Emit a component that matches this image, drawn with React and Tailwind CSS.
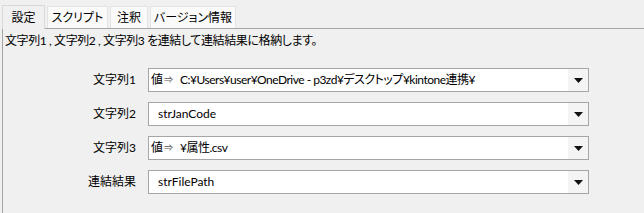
import React from "react";

const tabs = [
  { label: "設定", w: "w-[43px]" },
  { label: "スクリプト", w: "w-[61px]" },
  { label: "注釈", w: "w-[38px]" },
  { label: "バージョン情報", w: "w-[86px]" },
];

const rows = [
  { label: "文字列1", prefix: true, value: "C:¥Users¥user¥OneDrive - p3zd¥デスクトップ¥kintone連携¥" },
  { label: "文字列2", prefix: false, value: "strJanCode" },
  { label: "文字列3", prefix: true, value: "¥属性.csv" },
  { label: "連結結果", prefix: false, value: "strFilePath" },
];

const ComboBox = ({ prefix, value }) => (
  <div className="flex h-[24px] w-[441px] border border-[#a6a6a6] bg-white">
    <div className="flex flex-1 items-center overflow-hidden whitespace-nowrap">
      {prefix ? (
        <>
          <span className="pl-[2px]">値</span>
          <span className="pl-[1px] text-[9px] text-[#555]">⇒</span>
          <span className="pl-[7px] tracking-[-0.5px]">{value}</span>
        </>
      ) : (
        <span className="pl-[9px]">{value}</span>
      )}
    </div>
    <div className="flex w-[20px] items-center justify-center bg-[#f4f4f4]">
      <svg width="9" height="5" viewBox="0 0 9 5">
        <path d="M0 0 H9 L4.5 5 Z" fill="#111" />
      </svg>
    </div>
  </div>
);

export default function App() {
  return (
    <div
      className="h-[213px] w-[644px] overflow-hidden bg-[#f0f0f0] text-[12px] text-black [font-feature-settings:'palt']"
      style={{ fontFamily: '"Lato", "Noto Sans CJK JP", sans-serif' }}
    >
      {/* Tabs */}
      <div className="flex items-end gap-[2px] pl-[2px] pt-[5px]">
        {tabs.map((t, i) => (
          <div
            key={t.label}
            className={
              i === 0
                ? `relative z-10 -mb-px flex h-[24px] ${t.w} items-center justify-center border border-b-0 border-[#d9d9d9] bg-[#f0f0f0]`
                : `flex h-[22px] ${t.w} items-center justify-center border border-b-0 border-[#e3e3e3] bg-[#fafafa]`
            }
          >
            {t.label}
          </div>
        ))}
      </div>

      {/* Panel */}
      <div className="ml-[2px] h-[200px] border-l border-t border-[#a6a6a6] bg-[#f0f0f0]">
        <div className="pl-[2px] pt-[4px] leading-[16px] tracking-[-0.4px]">
          文字列1 , 文字列2 , 文字列3 を連結して連結結果に格納します。
        </div>
        <div className="mt-[19px] flex flex-col gap-[10px]">
          {rows.map((r) => (
            <div key={r.label} className="flex items-center">
              <div className="w-[134px] pr-[1px] text-right">{r.label}</div>
              <div className="ml-[11px]">
                <ComboBox prefix={r.prefix} value={r.value} />
              </div>
            </div>
          ))}
        </div>
      </div>
    </div>
  );
}
